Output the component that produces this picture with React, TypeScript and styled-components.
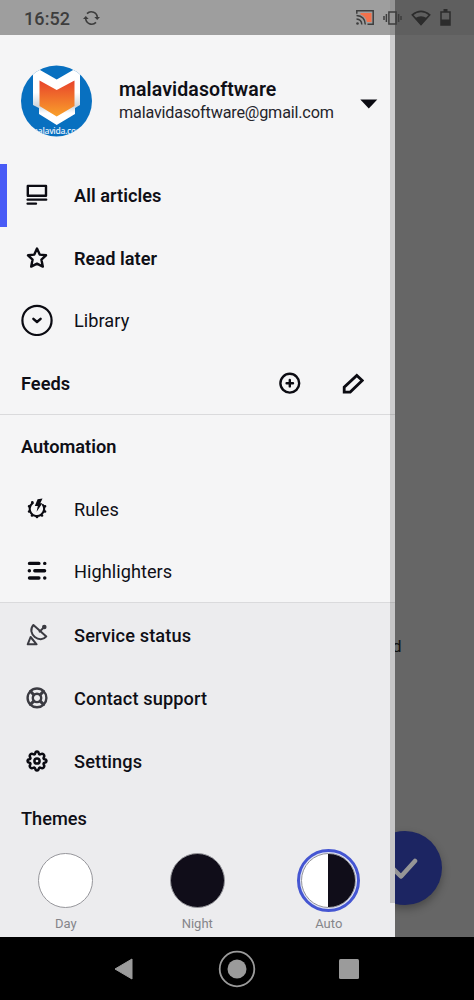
import type { ReactNode } from 'react';
import styled, { createGlobalStyle } from 'styled-components';

const GlobalStyle = createGlobalStyle`
  * {
    box-sizing: border-box;
  }

  body {
    margin: 0;
    background: #000;
    font-family: Roboto, 'Liberation Sans', sans-serif;
    color: #0f0f16;
  }

  svg {
    display: block;
    flex: none;
  }
`;

const Screen = styled.div`
  display: flex;
  flex-direction: column;
  width: 474px;
  height: 1000px;
  overflow: hidden;
`;

const StatusBar = styled.header`
  display: flex;
  align-items: center;
  height: 35px;
  padding: 0 23px 0 24px;
  color: #3d3d3d;
  background: linear-gradient(
    to right,
    #9e9e9e 390px,
    #959595 390px,
    #959595 395px,
    #5f5f5f 395px
  );
`;

const Clock = styled.span`
  width: 59px;
  padding-top: 1px;
  font-size: 18px;
  font-weight: 500;
  letter-spacing: 0.1px;
`;

const StatusIcons = styled.div`
  display: flex;
  align-items: center;
  gap: 9px;
  margin-left: auto;
`;

const Main = styled.main`
  display: flex;
  height: 902px;
`;

const Drawer = styled.aside`
  position: relative;
  display: flex;
  flex-direction: column;
  width: 395px;
  background: #f5f5f6;
`;

const ScrollThumb = styled.div`
  position: absolute;
  top: 0;
  right: 0;
  width: 5px;
  height: 868px;
  background: rgba(0, 0, 0, 0.16);
`;

const Account = styled.div`
  display: flex;
  align-items: center;
  height: 129px;
  padding: 3px 17px 0 21px;
`;

const AccountText = styled.div`
  flex: 1;
  margin-left: 27px;
  padding-top: 2px;
`;

const UserName = styled.div`
  font-size: 19.5px;
  font-weight: 600;
  line-height: 22px;
  letter-spacing: 0.1px;
`;

const Email = styled.div`
  font-size: 16.2px;
  line-height: 24px;
  letter-spacing: -0.18px;
  color: #24242b;
`;

const Caret = styled.svg`
  margin-top: 6px;
`;

const Group = styled.div<{ $divider?: boolean }>`
  border-bottom: ${(p) => (p.$divider ? '1px solid #dadadc' : 'none')};
`;

const Footer = styled.div`
  flex: 1;
  margin-top: -0.5px;
  border-top: 1px solid #dadadc;
  background: #ececee;
`;

const Row = styled.div<{ $active?: boolean; $height?: number }>`
  display: flex;
  align-items: center;
  height: ${(p) => p.$height ?? 62.5}px;
  padding-left: ${(p) => (p.$active ? 14 : 21)}px;
  border-left: ${(p) => (p.$active ? '7px solid #485bf6' : 'none')};
`;

const IconSlot = styled.div`
  display: flex;
  justify-content: center;
  width: 32px;
  margin-right: 21px;
`;

const Label = styled.span<{ $weight?: number; $spacing?: number }>`
  padding-top: 2px;
  font-size: 18.2px;
  line-height: 24px;
  font-weight: ${(p) => p.$weight ?? 400};
  letter-spacing: ${(p) => p.$spacing ?? 0.03}px;
`;

const FeedActions = styled.div`
  display: flex;
  gap: 41px;
  margin-left: auto;
  padding-right: 31px;
`;

const ThemesTitle = styled.div`
  padding: 15px 0 0 21px;
  font-size: 18.2px;
  font-weight: 500;
  line-height: 24px;
`;

const Themes = styled.div`
  display: grid;
  grid-template-columns: repeat(3, 131.5px);
  padding-top: 18px;
`;

const ThemeOption = styled.div`
  display: flex;
  flex-direction: column;
  align-items: center;
`;

const Ring = styled.div<{ $selected?: boolean }>`
  display: flex;
  align-items: center;
  justify-content: center;
  width: 63px;
  height: 63px;
  border: 3px solid ${(p) => (p.$selected ? '#4556d2' : 'transparent')};
  border-radius: 50%;
  background: ${(p) => (p.$selected ? '#e0e4f6' : 'transparent')};
`;

const Swatch = styled.div<{ $fill: string }>`
  width: 55px;
  height: 55px;
  border: 1px solid #96969b;
  border-radius: 50%;
  background: ${(p) => p.$fill};
`;

const ThemeName = styled.span`
  margin-top: 4px;
  font-size: 13px;
  line-height: 16px;
  color: #85858a;
`;

const Backdrop = styled.section`
  position: relative;
  flex: 1;
  padding-top: 599px;
  overflow: hidden;
  background: #666;
`;

const Article = styled.p`
  margin: 0 0 0 -3px;
  font-size: 17px;
  line-height: 24px;
  color: #111;
`;

const DoneButton = styled.div`
  position: absolute;
  top: 796px;
  left: -27px;
  display: flex;
  align-items: center;
  justify-content: center;
  width: 74px;
  height: 74px;
  border-radius: 50%;
  background: #1c2562;
  box-shadow: 0 4px 9px rgba(0, 0, 0, 0.3);
`;

const NavBar = styled.nav`
  display: flex;
  align-items: center;
  height: 63px;
  padding-left: 114px;
  background: #000;
`;

const HomeButton = styled.svg`
  margin: 0 83px 0 85px;
`;

const Avatar = () => (
  <svg width="71" height="72" viewBox="0 0 71 72">
    <defs>
      <linearGradient id="flame" x1="0" y1="0" x2="0" y2="1">
        <stop offset="0" stopColor="#e8432b" />
        <stop offset="1" stopColor="#f9a12b" />
      </linearGradient>
      <linearGradient id="paper" x1="0" y1="0" x2="0" y2="1">
        <stop offset="0.45" stopColor="#fff" />
        <stop offset="0.68" stopColor="#cfd6dd" />
        <stop offset="0.8" stopColor="#fff" />
      </linearGradient>
      <clipPath id="disc">
        <circle cx="35.5" cy="36" r="35.5" />
      </clipPath>
    </defs>
    <g clipPath="url(#disc)">
      <rect width="71" height="72" fill="#0870c0" />
      <path d="M12 1L35.7 14.5L59 1V40L54 43V49L35.7 60L18 49V43L12 40Z" fill="url(#paper)" />
      <path d="M18.5 15.5L35.7 25L53.5 15.5V41L35.7 51.5L18.5 41Z" fill="url(#flame)" />
      <text x="36" y="69" textAnchor="middle" fill="#e4effa" fontSize="8.5" fontWeight="600" fontFamily="Open Sans" textLength="54">
        malavida.com
      </text>
    </g>
  </svg>
);

const Icon = ({
  size = 24,
  width = 2.4,
  color = '#0b0b12',
  children,
}: {
  size?: number;
  width?: number;
  color?: string;
  children: ReactNode;
}) => (
  <svg
    width={size}
    height={size}
    viewBox={`0 0 ${size} ${size}`}
    fill="none"
    stroke={color}
    strokeWidth={width}
    strokeLinecap="round"
    strokeLinejoin="round"
  >
    {children}
  </svg>
);

const ArticlesIcon = () => (
  <Icon>
    <path d="M2.8 2.9H21V12.8H2.8Z" />
    <path d="M2.6 16.6H21.2M2.6 20.6H11" />
  </Icon>
);

const StarIcon = () => (
  <Icon>
    <path d="M12 2.6L14.7 8.6L21 9.3L16.4 13.6L17.8 20.6L12 17.6L6.2 20.6L7.6 13.6L3 9.3L9.3 8.6Z" />
  </Icon>
);

const LibraryIcon = () => (
  <Icon size={32} width={2.2}>
    <circle cx="16" cy="16.4" r="14.6" />
    <path d="M12.4 14.9L16 18L19.6 14.9" strokeWidth="2.5" />
  </Icon>
);

const RulesIcon = () => (
  <Icon width={2.1}>
    <path d="M7.6 6.1A7.2 7.2 0 1 0 18 8" />
    <path
      d="M20 9.3h.01M20 14.5h.01M17 18.5h.01M12 20h.01M7 18.5h.01M4.1 14.5h.01M4.1 9.3h.01M7.3 5.4h.01"
      strokeWidth="2.7"
    />
    <path d="M12.6 2.2L17.5 1.6L15.3 6.2H17.4L11.6 14.8L12.8 9H9.8Z" fill="#0b0b12" stroke="none" />
  </Icon>
);

const HighlightersIcon = () => (
  <Icon width={3.4}>
    <path d="M4.5 4.4H13.9M19.7 4.4H19.8M4.3 11.7H4.4M9.8 11.7H19.6M4.5 19H13.9M19.7 19H19.8" />
  </Icon>
);

const SatelliteIcon = () => (
  <Icon width={2} color="#3b3b42">
    <path d="M8.4 2C4.8 6 6.2 11 9.8 14C13.5 17 18.5 17 21.3 13.4Z" />
    <path d="M14.6 8.6L18.5 4.8M5.6 14L2.7 21.3H11.6Z" />
    <circle cx="19.3" cy="4" r="1.3" fill="#3b3b42" />
  </Icon>
);

const SupportIcon = () => (
  <Icon width={2.4} color="#3b3b42">
    <circle cx="12" cy="11.9" r="9.4" />
    <circle cx="12" cy="11.9" r="4.2" />
    <path d="M5.5 5.4L8.8 8.7M18.5 5.4L15.2 8.7M5.5 18.4L8.8 15.1M18.5 18.4L15.2 15.1" strokeWidth="3" />
  </Icon>
);

const SettingsIcon = () => (
  <Icon width={2.5}>
    <path d="M10.2 4.4C10.6 1.9 13.4 1.9 13.8 4.4C14.1 5.5 14.8 5.7 15.7 5.2C17.8 3.8 20.2 6.2 18.8 8.3C18.3 9.2 18.5 9.9 19.6 10.2C22.1 10.6 22.1 13.4 19.6 13.8C18.5 14.1 18.3 14.8 18.8 15.7C20.2 17.8 17.8 20.2 15.7 18.8C14.8 18.3 14.1 18.5 13.8 19.6C13.4 22.1 10.6 22.1 10.2 19.6C9.9 18.5 9.2 18.3 8.3 18.8C6.2 20.2 3.8 17.8 5.2 15.7C5.7 14.8 5.5 14.1 4.4 13.8C1.9 13.4 1.9 10.6 4.4 10.2C5.5 9.9 5.7 9.2 5.2 8.3C3.8 6.2 6.2 3.8 8.3 5.2C9.2 5.7 9.9 5.5 10.2 4.4Z" />
    <circle cx="12" cy="12" r="2.6" />
  </Icon>
);

const AddIcon = () => (
  <Icon size={22}>
    <circle cx="10.8" cy="11.2" r="9.4" />
    <path d="M10.8 8V14.4M7.6 11.2H14" />
  </Icon>
);

const EditIcon = () => (
  <Icon size={22} width={2.8}>
    <path d="M2.2 20.1V15.2L14.8 3.4L20.2 8.5L8.2 20.1Z" strokeLinejoin="miter" />
  </Icon>
);

const feeds = [
  { icon: <ArticlesIcon />, label: 'All articles', weight: 600, active: true },
  { icon: <StarIcon />, label: 'Read later', weight: 600 },
  { icon: <LibraryIcon />, label: 'Library' },
];

const automation = [
  { icon: <RulesIcon />, label: 'Rules' },
  { icon: <HighlightersIcon />, label: 'Highlighters' },
];

const links = [
  { icon: <SatelliteIcon />, label: 'Service status' },
  { icon: <SupportIcon />, label: 'Contact support' },
  { icon: <SettingsIcon />, label: 'Settings' },
];

const themes = [
  { name: 'Day', fill: '#fff' },
  { name: 'Night', fill: '#100d19' },
  {
    name: 'Auto',
    fill: 'linear-gradient(to right, #fff 50%, #100d19 50%)',
    selected: true,
  },
];

export default function App() {
  return (
    <Screen>
      <GlobalStyle />
      <StatusBar>
        <Clock>16:52</Clock>
        <svg width="17" height="16" viewBox="0 0 17 16" fill="none" stroke="currentColor" strokeWidth="1.6">
          <path d="M4 3.6A6 6 0 0 1 14.3 8M13 12.4A6 6 0 0 1 2.7 8" />
          <path d="M11.3 7H17L14.2 10ZM0 9H5.7L2.8 6Z" fill="currentColor" stroke="none" />
        </svg>
        <StatusIcons>
          <svg width="18" height="15" viewBox="0 0 18 15" fill="none" stroke="currentColor" strokeWidth="1.5">
            <path d="M4.5 3H15.5V12H11Q10 6 4.5 4.5Z" fill="#f2714b" stroke="none" />
            <path d="M.8 3.8V.8H17.2V14.2H11.5M.5 5.5Q9 6 9.3 14.5M.5 9Q5.5 9.3 5.8 14.5" />
            <circle cx="1.5" cy="13.5" r="1.3" fill="currentColor" stroke="none" />
          </svg>
          <svg width="19" height="14" viewBox="0 0 19 14" fill="none" stroke="currentColor" strokeWidth="1.5">
            <path d="M5.9 1H13.1V13H5.9ZM3.4 3V11M15.6 3V11M1 5V9M18 5V9" />
          </svg>
          <svg width="20" height="16" viewBox="0 0 20 16">
            <path d="M1.3 4.9Q10 -2.2 18.7 4.9L10 14.6Z" fill="none" stroke="#2c2c2c" strokeWidth="1.6" />
            <path d="M4.3 8Q10 4.5 15.7 8L10 15Z" fill="#2c2c2c" />
          </svg>
          <svg width="11" height="17" viewBox="0 0 11 17" fill="none" stroke="#2c2c2c" strokeWidth="1.5">
            <path d="M1 2.9H10V16H1Z" />
            <path d="M3.5 0H7.5V3H3.5ZM1 10.5H10V16H1Z" fill="#2c2c2c" stroke="none" />
          </svg>
        </StatusIcons>
      </StatusBar>
      <Main>
        <Drawer>
          <Account>
            <Avatar />
            <AccountText>
              <UserName>malavidasoftware</UserName>
              <Email>malavidasoftware@gmail.com</Email>
            </AccountText>
            <Caret width="18" height="10" viewBox="0 0 18 10">
              <path d="M.3 .5H17.3L8.8 9.5Z" fill="#0b0b12" />
            </Caret>
          </Account>
          <Group $divider>
            {feeds.map((item) => (
              <Row key={item.label} $active={item.active}>
                <IconSlot>{item.icon}</IconSlot>
                <Label $weight={item.weight}>{item.label}</Label>
              </Row>
            ))}
            <Row>
              <Label $weight={600}>Feeds</Label>
              <FeedActions>
                <AddIcon />
                <EditIcon />
              </FeedActions>
            </Row>
          </Group>
          <Group>
            <Row>
              <Label $weight={600}>Automation</Label>
            </Row>
            {automation.map((item) => (
              <Row key={item.label}>
                <IconSlot>{item.icon}</IconSlot>
                <Label>{item.label}</Label>
              </Row>
            ))}
          </Group>
          <Footer>
            {links.map((item) => (
              <Row key={item.label} $height={63}>
                <IconSlot>{item.icon}</IconSlot>
                <Label $weight={500} $spacing={0.12}>
                  {item.label}
                </Label>
              </Row>
            ))}
            <ThemesTitle>Themes</ThemesTitle>
            <Themes>
              {themes.map((theme) => (
                <ThemeOption key={theme.name}>
                  <Ring $selected={theme.selected}>
                    <Swatch $fill={theme.fill} />
                  </Ring>
                  <ThemeName>{theme.name}</ThemeName>
                </ThemeOption>
              ))}
            </Themes>
          </Footer>
          <ScrollThumb />
        </Drawer>
        <Backdrop>
          <Article>d</Article>
          <DoneButton>
            <svg width="28" height="24" viewBox="0 0 28 24" fill="none" stroke="#969696" strokeWidth="4.5">
              <path d="M2.5 13L10 20.5L24 5" strokeLinecap="round" strokeLinejoin="round" />
            </svg>
          </DoneButton>
        </Backdrop>
      </Main>
      <NavBar>
        <svg width="19" height="22" viewBox="0 0 19 22">
          <path d="M1 11L18 1V21Z" fill="#9b9b9b" stroke="#9b9b9b" strokeLinejoin="round" />
        </svg>
        <HomeButton width="38" height="38" viewBox="0 0 38 38">
          <circle cx="19" cy="19" r="17.3" fill="none" stroke="#9b9b9b" strokeWidth="1.8" />
          <circle cx="19" cy="19" r="9.5" fill="#9b9b9b" />
        </HomeButton>
        <svg width="20" height="20" viewBox="0 0 20 20">
          <rect width="20" height="20" rx="1.5" fill="#9b9b9b" />
        </svg>
      </NavBar>
    </Screen>
  );
}
